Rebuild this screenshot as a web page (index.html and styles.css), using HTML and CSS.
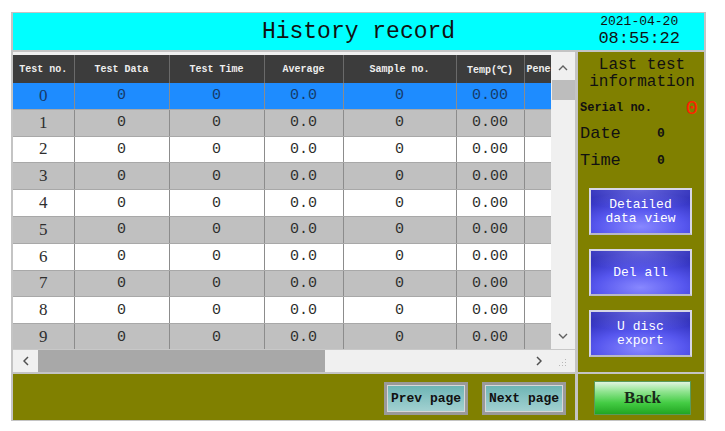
FILE: index.html
```html
<!DOCTYPE html>
<html>
<head>
    <title>History record</title>
    <link rel="stylesheet" href="styles.css">
</head>
<body>
    <div class="screen">
        <header class="topbar">
            <div></div>
            <h1>History record</h1>
            <div class="clock">
                <div class="date">2021-04-20</div>
                <div class="time">08:55:22</div>
            </div>
        </header>

        <div class="main">
            <div class="tableArea">
                <div class="tableView">
                    <table class="records">
                        <colgroup>
                            <col class="c1"><col class="c2"><col class="c3"><col class="c4"><col class="c5"><col class="c6"><col class="c7">
                        </colgroup>
                        <thead>
                            <tr>
                                <th>Test no.</th>
                                <th>Test Data</th>
                                <th>Test Time</th>
                                <th>Average</th>
                                <th>Sample no.</th>
                                <th>Temp(℃)</th>
                                <th class="clip">Pene</th>
                            </tr>
                        </thead>
                        <tbody id="rows"></tbody>
                    </table>
                    <div class="vscroll">
                        <svg class="arrow" width="10" height="6" viewBox="0 0 10 6"><path d="M1 5 L5 1 L9 5" fill="none" stroke="#606060" stroke-width="1.4"/></svg>
                        <div class="vthumb"></div>
                        <div class="vtrack"></div>
                        <svg class="arrow down" width="10" height="6" viewBox="0 0 10 6"><path d="M1 1 L5 5 L9 1" fill="none" stroke="#606060" stroke-width="1.4"/></svg>
                    </div>
                </div>
                <div class="hscroll">
                    <span class="harrow"><svg width="6" height="10" viewBox="0 0 6 10"><path d="M5 1 L1 5 L5 9" fill="none" stroke="#505050" stroke-width="1.5"/></svg></span>
                    <div class="hthumb"></div>
                    <div class="htrack"></div>
                    <span class="harrow"><svg width="6" height="10" viewBox="0 0 6 10"><path d="M1 1 L5 5 L1 9" fill="none" stroke="#505050" stroke-width="1.5"/></svg></span>
                    <span class="grip">
                        <svg width="8" height="8" viewBox="0 0 8 8" fill="#b8b8b8"><rect x="6" y="0" width="1" height="1"/><rect x="6" y="3" width="1" height="1"/><rect x="3" y="3" width="1" height="1"/><rect x="6" y="6" width="1" height="1"/><rect x="3" y="6" width="1" height="1"/><rect x="0" y="6" width="1" height="1"/></svg>
                    </span>
                </div>
            </div>

            <aside class="info">
                <div class="infoTitle">Last test<br>information</div>
                <div class="serial"><span>Serial no.</span><span class="serialVal">0</span></div>
                <div class="field"><span class="fieldName">Date</span><span class="fieldVal">0</span></div>
                <div class="field"><span class="fieldName">Time</span><span class="fieldVal">0</span></div>
                <div class="actions">
                    <button class="blueBtn">Detailed<br>data view</button>
                    <button class="blueBtn">Del all</button>
                    <button class="blueBtn">U disc<br>export</button>
                </div>
            </aside>

            <div class="pager">
                <button class="pageBtn">Prev page</button>
                <button class="pageBtn">Next page</button>
            </div>

            <div class="backBox">
                <button class="backBtn">Back</button>
            </div>
        </div>
    </div>

    <script>
        const rows = document.getElementById('rows');
        for (let i = 0; i < 10; i++) {
            const tr = document.createElement('tr');
            if (i === 0) tr.className = 'selected';
            else if (i % 2 === 1) tr.className = 'odd';
            tr.innerHTML = `<td class="num">${i}</td><td>0</td><td>0</td><td>0.0</td><td>0</td><td>0.00</td><td></td>`;
            rows.appendChild(tr);
        }
    </script>
</body>
</html>
```

FILE: styles.css
```css
body {
    margin: 0;
    background-color: #ffffff;
    font-family: "Liberation Mono", monospace;
}

.screen {
    margin: 12px 0 0 11px;
    width: 695px;
    height: 409px;
    background-color: #c4c4c4;
    padding: 1px 2px 1px 2px;
    box-sizing: border-box;
    display: flex;
    flex-direction: column;
    gap: 2px;
}

.topbar {
    height: 37px;
    flex: none;
    background-color: #00ffff;
    display: grid;
    grid-template-columns: 1fr auto 1fr;
    align-items: center;
}

.topbar h1 {
    margin: 0;
    font-weight: normal;
    font-size: 23px;
    color: #111;
    padding-top: 1px;
}

.clock {
    justify-self: end;
    margin-right: 24px;
    text-align: center;
    color: #111;
}

.date {
    font-size: 13px;
    line-height: 15px;
}

.time {
    font-size: 17px;
    line-height: 20px;
}

.main {
    flex: 1;
    display: grid;
    grid-template-columns: 562px 1fr;
    grid-template-rows: 320px 1fr;
    gap: 2px 3px;
}

.tableArea {
    background-color: #f0f0f0;
    padding-top: 3px;
    display: flex;
    flex-direction: column;
    overflow: hidden;
}

.tableView {
    display: flex;
    height: 296px;
    overflow: hidden;
}

.records {
    border-collapse: collapse;
    table-layout: fixed;
    width: 538px;
    font-size: 15px;
    color: #2e2e2e;
    align-self: flex-start;
}

.c1 { width: 61px; }
.c2 { width: 95px; }
.c3 { width: 95px; }
.c4 { width: 79px; }
.c5 { width: 113px; }
.c6 { width: 68px; }
.c7 { width: 27px; }

.records th {
    height: 28px;
    padding: 0;
    background-color: #3c3c3c;
    color: #eeeeee;
    font-size: 10px;
    font-weight: bold;
    border-right: 1px solid #6a6a6a;
    white-space: nowrap;
    overflow: hidden;
}

.records th.clip {
    text-align: left;
    padding-left: 2px;
    border-right: none;
}

.records td {
    height: 25.8px;
    padding: 0;
    text-align: center;
    background-color: #ffffff;
    border-right: 1px solid #8c8c8c;
    border-bottom: 1px solid #a8a8a8;
}

.records td:last-child {
    border-right: none;
}

.records td.num {
    font-family: "Liberation Serif", serif;
    font-size: 17px;
}

.records tr.odd td {
    background-color: #c0c0c0;
}

.records tr.selected td {
    background-color: #1e8cff;
    color: #163a6a;
}

.vscroll {
    width: 24px;
    display: flex;
    flex-direction: column;
    align-items: center;
    background-color: #f0f0f0;
}

.arrow {
    margin: 10px 0 9px;
}

.arrow.down {
    margin: 0 0 10px;
}

.vthumb {
    width: 23px;
    height: 20px;
    background-color: #bdbdbd;
}

.vtrack {
    flex: 1;
}

.hscroll {
    height: 22px;
    display: flex;
    align-items: center;
    background-color: #f0f0f0;
    border-top: 1px solid #c8c8c8;
}

.harrow {
    width: 25px;
    display: flex;
    justify-content: center;
}

.hthumb {
    width: 287px;
    height: 100%;
    background-color: #a8a8a8;
}

.htrack {
    flex: 1;
}

.grip {
    width: 24px;
    display: flex;
    justify-content: center;
    padding-top: 4px;
}

.info {
    grid-row: 1;
    grid-column: 2;
    background-color: #808000;
    color: #111;
    padding: 5px 0 0 2px;
}

.infoTitle {
    text-align: center;
    font-size: 16px;
    line-height: 17px;
    margin-bottom: 5px;
}

.serial {
    display: flex;
    justify-content: space-between;
    align-items: center;
    font-size: 12px;
    font-weight: bold;
    height: 24px;
    padding-right: 6px;
}

.serialVal {
    color: #ff2200;
    font-weight: normal;
    font-size: 21px;
}

.field {
    display: flex;
    align-items: center;
    height: 27px;
}

.fieldName {
    font-size: 17px;
    width: 77px;
}

.fieldVal {
    font-size: 13px;
    font-weight: bold;
}

.actions {
    display: flex;
    flex-direction: column;
    gap: 14px;
    padding: 14px 0 0 9px;
}

.blueBtn {
    width: 103px;
    height: 47px;
    border: 2px solid #d6d6e6;
    border-bottom-color: #b8b8c8;
    background:
        radial-gradient(ellipse 70% 45% at 50% 0%, rgba(150, 150, 255, 0.55) 0%, rgba(150, 150, 255, 0) 100%),
        radial-gradient(ellipse 90% 80% at 50% 85%, #8888ff 0%, #5656ee 50%, #2a2ab4 100%);
    color: #ffffff;
    font-family: "Liberation Mono", monospace;
    font-size: 13px;
    line-height: 14px;
    padding: 0;
}

.pager {
    background-color: #808000;
    display: flex;
    justify-content: flex-end;
    align-items: center;
    gap: 14px;
    padding: 2px 9px 0 0;
}

.pageBtn {
    width: 84px;
    height: 33px;
    border: 3px solid #9a9a9a;
    outline: 1px solid #d8d8d8;
    outline-offset: -4px;
    background: linear-gradient(#6cb4b4, #a4d2d2);
    color: #111;
    font-family: "Liberation Mono", monospace;
    font-size: 13px;
    font-weight: bold;
    padding: 0;
}

.backBox {
    background-color: #808000;
    padding: 7px 0 0 16px;
}

.backBtn {
    width: 97px;
    height: 34px;
    border: 1px solid #5a9a5a;
    background: linear-gradient(#e0f4e0 0%, #90e490 30%, #44cc44 65%, #22a622 100%);
    color: #1a2a1a;
    font-family: "Liberation Serif", serif;
    font-size: 17px;
    font-weight: bold;
    padding: 0;
}
```
